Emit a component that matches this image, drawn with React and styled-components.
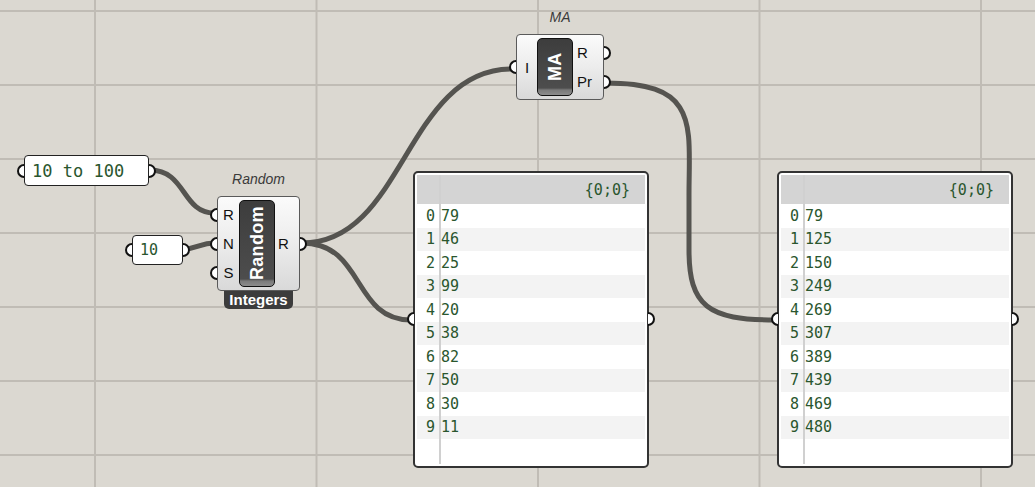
import styled, { createGlobalStyle } from 'styled-components';

const GlobalStyle = createGlobalStyle`
  html, body {
    margin: 0;
    padding: 0;
    background: #dbd8d1;
  }
  body {
    font-family: "Liberation Sans", Arial, sans-serif;
  }
`;

const Canvas = styled.div`
  position: relative;
  width: 1035px;
  height: 487px;
  overflow: hidden;
  background-color: #dbd8d1;
  background-image:
    linear-gradient(to right, #c0bcb5 2px, transparent 2px),
    linear-gradient(to bottom, #c0bcb5 2px, transparent 2px);
  background-size: 221.5px 100%, 100% 74px;
  background-position: 94px 0, 0 10px;
`;

const Wires = styled.svg`
  position: absolute;
  inset: 0;
  width: 1035px;
  height: 487px;
  fill: none;
  stroke: #555450;
  stroke-width: 5;
  stroke-linecap: round;
`;

const Node = styled.div`
  position: absolute;
  left: ${(p) => p.$x}px;
  top: ${(p) => p.$y}px;
  display: flex;
  flex-direction: column;
  align-items: center;
`;

const Grip = styled.span`
  position: absolute;
  top: 50%;
  width: 5px;
  height: 10px;
  margin-top: -7px;
  background: #fff;
  border: 2px solid #111;
  ${(p) =>
    p.$side === 'in'
      ? 'left: -8px; border-right: 0; border-radius: 7px 0 0 7px;'
      : 'right: -8px; border-left: 0; border-radius: 0 7px 7px 0;'}
`;

/* ---------- text panels ---------- */

const TextPanel = styled.div`
  position: relative;
  width: ${(p) => p.$w}px;
  height: ${(p) => p.$h}px;
  box-sizing: border-box;
  background: #fff;
  border: 1.5px solid #222;
  border-radius: 4px;
  display: flex;
  align-items: center;
  padding-left: 7px;
  font-family: "DejaVu Sans Mono", "Liberation Mono", monospace;
  font-size: ${(p) => p.$size}px;
  color: #2a562e;
`;

/* ---------- components ---------- */

const Title = styled.div`
  height: 20px;
  line-height: 20px;
  margin-bottom: 7px;
  font-size: 14px;
  font-style: italic;
  color: #3a3a3a;
`;

const Body = styled.div`
  position: relative;
  width: ${(p) => p.$w}px;
  height: ${(p) => p.$h}px;
  box-sizing: border-box;
  display: flex;
  padding: 3px 0;
  background: linear-gradient(to bottom, #fbfbfb 0%, #ececec 50%, #d9d9d9 100%);
  border: 1px solid #5a5a5a;
  border-radius: 4px;
`;

const PortColumn = styled.div`
  width: ${(p) => p.$w}px;
  display: flex;
  flex-direction: column;
`;

const Port = styled.div`
  position: relative;
  flex: 1;
  display: flex;
  align-items: center;
  justify-content: ${(p) => (p.$side === 'in' ? 'center' : 'flex-start')};
  padding-left: ${(p) => (p.$side === 'in' ? 0 : 4)}px;
  font-size: 15px;
  color: #111;
`;

const Capsule = styled.div`
  width: ${(p) => p.$w}px;
  box-sizing: border-box;
  display: flex;
  align-items: center;
  justify-content: center;
  border: 1.5px solid #111;
  border-radius: 5px;
  background: linear-gradient(
    to bottom,
    #8c8c8c 0px,
    #7a7a7a 5px,
    #4d4d4d 7px,
    #3d3d3d 100%
  );
  color: #fff;
  font-size: 18px;
  font-weight: bold;
  writing-mode: vertical-rl;
  transform: rotate(180deg);
  letter-spacing: 0.3px;
`;

const Tag = styled.div`
  height: 18px;
  line-height: 18px;
  padding: 0 5px;
  background: #3c3c3c;
  color: #fff;
  font-size: 15px;
  font-weight: bold;
  border-radius: 0 0 5px 5px;
`;

/* ---------- data panels ---------- */

const DataPanel = styled.div`
  position: relative;
  width: 236px;
  height: 297px;
  box-sizing: border-box;
  padding: 2px;
  background: #fff;
  border: 2px solid #333;
  border-radius: 5px;
  font-family: "DejaVu Sans Mono", "Liberation Mono", monospace;
  font-size: 15px;
  color: #2a562e;
`;

const Divider = styled.div`
  position: absolute;
  top: 2px;
  bottom: 2px;
  left: 24px;
  width: 1.5px;
  background: #d0d0d0;
`;

const Header = styled.div`
  height: 29px;
  display: flex;
  align-items: center;
  justify-content: flex-end;
  padding-right: 15px;
  background: #d4d4d4;
`;

const Row = styled.div`
  height: 23.5px;
  display: flex;
  align-items: center;
  background: ${(p) => (p.$alt ? '#f3f3f3' : '#fff')};
`;

const Index = styled.span`
  width: 18px;
  text-align: right;
  padding-right: 4px;
`;

const Value = styled.span`
  padding-left: 2px;
`;

const randomValues = [79, 46, 25, 99, 20, 38, 82, 50, 30, 11];
const maValues = [79, 125, 150, 249, 269, 307, 389, 439, 469, 480];

const Panel = ({ x, values }) => (
  <Node $x={x} $y={171}>
    <DataPanel>
      <Header>{'{0;0}'}</Header>
      {values.map((v, i) => (
        <Row key={i} $alt={i % 2 === 1}>
          <Index>{i}</Index>
          <Value>{v}</Value>
        </Row>
      ))}
      <Divider />
      <Grip $side="in" style={{ marginTop: -8 }} />
      <Grip $side="out" style={{ marginTop: -8 }} />
    </DataPanel>
  </Node>
);

const App = () => (
  <>
    <GlobalStyle />
    <Canvas>
      <Wires viewBox="0 0 1035 487">
        <path d="M150 170 C 186 170, 182 213, 214 213" />
        <path d="M183 249 C 198 249, 200 243, 214 243" />
        <path d="M302 243 C 405 243, 405 69, 512 69" />
        <path d="M302 243 C 365 243, 352 320, 411 320" />
        <path d="M606 83 C 700 83, 689 125, 689 195 L 689 250 C 689 306, 708 320, 775 320" />
      </Wires>

      <Node $x={24} $y={155}>
        <TextPanel $w={125} $h={31} $size={17}>
          10 to 100
          <Grip $side="in" />
          <Grip $side="out" />
        </TextPanel>
      </Node>

      <Node $x={132} $y={235}>
        <TextPanel $w={51} $h={30} $size={15}>
          10
          <Grip $side="in" />
          <Grip $side="out" />
        </TextPanel>
      </Node>

      <Node $x={217} $y={169}>
        <Title>Random</Title>
        <Body $w={83} $h={95}>
          <PortColumn $w={21}>
            <Port $side="in">R<Grip $side="in" /></Port>
            <Port $side="in">N<Grip $side="in" /></Port>
            <Port $side="in">S<Grip $side="in" /></Port>
          </PortColumn>
          <Capsule $w={36}>Random</Capsule>
          <PortColumn $w={24}>
            <Port $side="out" style={{ paddingLeft: 3 }}>
              R<Grip $side="out" />
            </Port>
          </PortColumn>
        </Body>
        <Tag>Integers</Tag>
      </Node>

      <Node $x={516} $y={7}>
        <Title>MA</Title>
        <Body $w={88} $h={66}>
          <PortColumn $w={20}>
            <Port $side="in">I<Grip $side="in" /></Port>
          </PortColumn>
          <Capsule $w={36}>MA</Capsule>
          <PortColumn $w={30}>
            <Port $side="out">R<Grip $side="out" /></Port>
            <Port $side="out">Pr<Grip $side="out" /></Port>
          </PortColumn>
        </Body>
      </Node>

      <Panel x={413} values={randomValues} />
      <Panel x={777} values={maValues} />
    </Canvas>
  </>
);

export default App;
